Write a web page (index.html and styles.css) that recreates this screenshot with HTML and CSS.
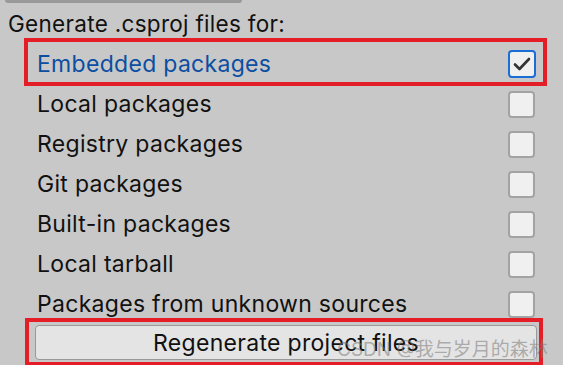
FILE: index.html
```html
<!DOCTYPE html>
<html lang="en">
<head>
    <meta charset="UTF-8">
    <title>Generate .csproj files</title>
    <link rel="stylesheet" href="styles.css">
</head>
<body>
    <div class="top-bar"></div>
    <div class="title">Generate .csproj files for:</div>

    <div class="row hl">
        <span class="label blue">Embedded packages</span>
        <span class="check on">
            <svg width="18" height="14" viewBox="0 0 18 14"><path d="M2 7.5 L6.5 12 L16 2" fill="none" stroke="#333" stroke-width="2.6" stroke-linecap="round" stroke-linejoin="round"/></svg>
        </span>
    </div>
    <div class="row"><span class="label">Local packages</span><span class="check"></span></div>
    <div class="row"><span class="label">Registry packages</span><span class="check"></span></div>
    <div class="row"><span class="label">Git packages</span><span class="check"></span></div>
    <div class="row"><span class="label">Built-in packages</span><span class="check"></span></div>
    <div class="row"><span class="label">Local tarball</span><span class="check"></span></div>
    <div class="row"><span class="label">Packages from unknown sources</span><span class="check"></span></div>

    <div class="btn-box">
        <button class="regen">Regenerate project files</button>
        <span class="watermark">CSDN @我与岁月的森林</span>
    </div>
</body>
</html>
```

FILE: styles.css
```css
body {
    margin: 0;
    background: #c8c8c8;
    font-family: Inter, "Noto Sans", sans-serif;
    color: #111;
    overflow: hidden;
}
.top-bar {
    margin-left: 5px;
    width: 237px;
    height: 3px;
    background: #999;
    border-radius: 0 0 4px 4px;
}
.title {
    height: 35px;
    padding-left: 8px;
    font-size: 22.5px;
    letter-spacing: 0.3px;
    line-height: 42px;
}
.row {
    display: flex;
    align-items: center;
    justify-content: space-between;
    height: 40px;
    padding: 0 28px 0 37px;
    font-size: 23px;
    letter-spacing: 0.3px;
}
.row.hl {
    box-sizing: border-box;
    height: 48px;
    margin: 0 16px -2px 24px;
    padding: 4px 7px 0 9px;
    border: 4px solid #e41e26;
}
.blue {
    color: #0b4ea2;
}
.check {
    box-sizing: border-box;
    width: 27px;
    height: 27px;
    display: flex;
    align-items: center;
    justify-content: center;
    background: #f0f0f0;
    border: 2px solid #a3a3a3;
    border-radius: 4px;
}
.check.on {
    width: 28px;
    height: 28px;
    border-color: #1b6dd6;
}
.btn-box {
    position: relative;
    box-sizing: border-box;
    margin: -6px 20px 0 25px;
    height: 48px;
    padding: 3px 2px 0 6px;
    border: 4px solid #e41e26;
}
.regen {
    width: 100%;
    height: 35px;
    background: #e4e4e4;
    border: 1px solid #999;
    border-radius: 4px;
    font-family: Inter, "Noto Sans", sans-serif;
    font-size: 23px;
    letter-spacing: 0.3px;
    color: #111;
    padding: 0;
}
.watermark {
    position: absolute;
    left: 308px;
    top: 12px;
    font-family: Inter, "Noto Sans CJK SC", sans-serif;
    font-size: 19px;
    color: rgba(120, 120, 120, 0.55);
    white-space: nowrap;
}
```
